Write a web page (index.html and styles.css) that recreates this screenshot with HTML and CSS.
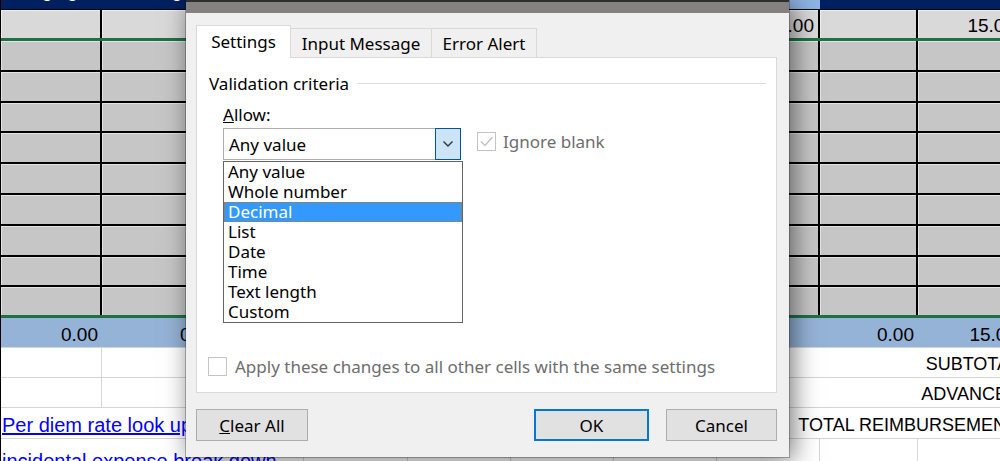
FILE: index.html
```html
<!DOCTYPE html>
<html>
<head>
<meta charset="utf-8">
<title>Data Validation</title>
<link rel="stylesheet" href="styles.css">
</head>
<body>
<div class="screen">
  <div class="sheet">
    <div class="row r-hdr">
      <div class="c hdr-left"><span class="hdr-txt">Lodging</span></div>
      <div class="c hdr-right"><span class="hdr-txt">Parking</span></div>
      <div class="c"></div><div class="c"></div><div class="c"></div><div class="c"></div><div class="c"></div>
      <div class="c sel"></div><div class="c"></div><div class="c"></div>
    </div>
    <div class="row r-top">
      <div class="c"></div><div class="c"></div><div class="c"></div><div class="c"></div><div class="c"></div><div class="c"></div><div class="c"></div>
      <div class="c num">0.00</div><div class="c"></div><div class="c num">15.00</div>
    </div>
    <div class="row r-gray"><div class="c"></div><div class="c"></div><div class="c"></div><div class="c"></div><div class="c"></div><div class="c"></div><div class="c"></div><div class="c"></div><div class="c"></div><div class="c"></div></div>
    <div class="row r-gray"><div class="c"></div><div class="c"></div><div class="c"></div><div class="c"></div><div class="c"></div><div class="c"></div><div class="c"></div><div class="c"></div><div class="c"></div><div class="c"></div></div>
    <div class="row r-gray"><div class="c"></div><div class="c"></div><div class="c"></div><div class="c"></div><div class="c"></div><div class="c"></div><div class="c"></div><div class="c"></div><div class="c"></div><div class="c"></div></div>
    <div class="row r-gray"><div class="c"></div><div class="c"></div><div class="c"></div><div class="c"></div><div class="c"></div><div class="c"></div><div class="c"></div><div class="c"></div><div class="c"></div><div class="c"></div></div>
    <div class="row r-gray"><div class="c"></div><div class="c"></div><div class="c"></div><div class="c"></div><div class="c"></div><div class="c"></div><div class="c"></div><div class="c"></div><div class="c"></div><div class="c"></div></div>
    <div class="row r-gray"><div class="c"></div><div class="c"></div><div class="c"></div><div class="c"></div><div class="c"></div><div class="c"></div><div class="c"></div><div class="c"></div><div class="c"></div><div class="c"></div></div>
    <div class="row r-gray"><div class="c"></div><div class="c"></div><div class="c"></div><div class="c"></div><div class="c"></div><div class="c"></div><div class="c"></div><div class="c"></div><div class="c"></div><div class="c"></div></div>
    <div class="row r-gray"><div class="c"></div><div class="c"></div><div class="c"></div><div class="c"></div><div class="c"></div><div class="c"></div><div class="c"></div><div class="c"></div><div class="c"></div><div class="c"></div></div>
    <div class="row r-gray r-gray-last"><div class="c"></div><div class="c"></div><div class="c"></div><div class="c"></div><div class="c"></div><div class="c"></div><div class="c"></div><div class="c"></div><div class="c"></div><div class="c"></div></div>
    <div class="row r-blue">
      <div class="c num">0.00</div><div class="c num">0.00</div>
      <div class="c"></div><div class="c"></div><div class="c"></div><div class="c"></div><div class="c"></div><div class="c"></div>
      <div class="c num">0.00</div><div class="c num">15.00</div>
    </div>
    <div class="row r-white">
      <div class="c line"></div><div class="c line"></div>
      <div class="c label">SUBTOTAL</div>
    </div>
    <div class="row r-white">
      <div class="c line"></div><div class="c line"></div>
      <div class="c label">ADVANCES</div>
    </div>
    <div class="row r-link">
      <div class="c link-cell"><a class="xl-link" href="#">Per diem rate look up</a></div>
      <div class="c label">TOTAL REIMBURSEMENT</div>
    </div>
    <div class="row r-last">
      <div class="c link-cell"><a class="xl-link" href="#">incidental expense break down</a></div>
      <div class="c line"></div><div class="c line"></div><div class="c line"></div><div class="c line"></div><div class="c line"></div><div class="c line"></div><div class="c line"></div>
    </div>
  </div>

  <div class="dialog">
    <div class="titlebar"></div>
    <div class="dbody">
      <div class="tabs">
        <div class="tab tab-active">Settings</div>
        <div class="tab tab-input">Input Message</div>
        <div class="tab tab-error">Error Alert</div>
      </div>
      <div class="panel">
        <div class="group-title">
          <span>Validation criteria</span>
          <span class="group-line"></span>
        </div>
        <div class="allow-label"><u>A</u>llow:</div>
        <div class="allow-row">
          <div class="combo">
            <div class="combo-text">Any value</div>
            <div class="combo-btn">
              <svg width="12" height="8" viewBox="0 0 12 8"><polyline points="1.5,1.5 6,6 10.5,1.5" fill="none" stroke="#333" stroke-width="1.4"/></svg>
            </div>
            <ul class="combo-list">
              <li>Any value</li>
              <li>Whole number</li>
              <li class="hl">Decimal</li>
              <li>List</li>
              <li>Date</li>
              <li>Time</li>
              <li>Text length</li>
              <li>Custom</li>
            </ul>
          </div>
          <div class="check check-ignore">
            <span class="box">
              <svg width="17" height="17" viewBox="0 0 17 17"><polyline points="3,8.5 7,12.5 14.5,4" fill="none" stroke="#c4c4c4" stroke-width="1.5"/></svg>
            </span>
            <span class="check-text">Ignore blank</span>
          </div>
        </div>
        <div class="check check-apply">
          <span class="box"></span>
          <span class="check-text">Apply these changes to all other cells with the same settings</span>
        </div>
      </div>
      <div class="buttons">
        <button class="btn btn-clear"><u>C</u>lear All</button>
        <span class="btn-spacer"></span>
        <button class="btn btn-ok">OK</button>
        <button class="btn btn-cancel">Cancel</button>
      </div>
    </div>
  </div>
</div>
</body>
</html>
```

FILE: styles.css
```css
* { box-sizing: border-box; }

html, body {
  margin: 0;
  padding: 0;
  background: #ffffff;
}

.screen {
  position: relative;
  width: 1000px;
  height: 461px;
  overflow: hidden;
  background: #ffffff;
}

/* ---------- spreadsheet ---------- */
.sheet {
  width: 1020px;
  border-left: 1px solid #000;
  font-family: "Liberation Sans", Arial, sans-serif;
  font-size: 18px;
  color: #000;
}

.row {
  display: grid;
  grid-template-columns: 101px 119px 83px 104px 103px 103px 103px 103px 98px 103px;
}

.c {
  display: flex;
  align-items: center;
  overflow: hidden;
  white-space: nowrap;
}

.num {
  justify-content: flex-end;
  padding-right: 4px;
  padding-top: 4px;
  font-size: 19px;
}

.r-hdr {
  height: 10px;
  background: #002060;
  border-bottom: 1px solid #000;
}
.r-hdr .c {
  align-items: flex-start;
  color: #fff;
}
.r-hdr .hdr-left { justify-content: flex-start; padding-left: 9px; }
.r-hdr .hdr-right { justify-content: flex-end; padding-right: 39px; }
.r-hdr .sel { background: #8db4e2; }
.hdr-txt {
  display: block;
  line-height: 22px;
  margin-top: -20px;
  font-size: 19px;
}

.r-top {
  height: 31px;
  background: #d9d9d9;
  border-bottom: 3px solid #1e7145;
}
.r-top .c {
  border-right: 2px solid #000;
  box-shadow: inset 1px 1px 0 #ededed;
}

.r-gray {
  height: 30.8px;
  background: #c6c6c6;
  border-bottom: 2px solid #000;
}
.r-gray .c {
  border-right: 2px solid #000;
  box-shadow: inset 1px 1px 0 #e3e3e3;
}
.r-gray-last {
  border-bottom: 3px solid #1e7145;
}

.r-blue {
  height: 30px;
  background: #95b3d7;
  border-bottom: 1px solid #d4d4d4;
}

.r-white {
  height: 30px;
  border-bottom: 1px solid #d4d4d4;
}
.r-white .line { border-right: 1px solid #d4d4d4; }
.r-white .label {
  grid-column: 3 / -1;
  justify-content: flex-end;
  padding-right: 2px;
  padding-top: 4px;
}

.r-link {
  height: 31px;
  border-bottom: 1px solid #d4d4d4;
}
.r-link .link-cell {
  grid-column: 1 / 4;
  padding-left: 1px;
  padding-top: 5px;
}
.r-link .label {
  grid-column: 4 / -1;
  justify-content: flex-end;
  padding-right: 4px;
  padding-top: 5px;
}

.r-last {
  height: 36px;
}
.r-last .link-cell {
  grid-column: 1 / 4;
  padding-left: 1px;
  align-items: flex-start;
  padding-top: 11px;
  border-right: 1px solid #d4d4d4;
}
.r-last .line { border-right: 1px solid #d4d4d4; }

.xl-link {
  color: #0000ff;
  text-decoration: underline;
  font-size: 20px;
}

/* ---------- dialog ---------- */
.dialog {
  position: absolute;
  left: 186px;
  top: 0;
  width: 603px;
  height: 457px;
  background: #f0f0f0;
  box-shadow: 0 0 0 1px rgba(0,0,0,0.25), 4px 3px 24px rgba(0,0,0,0.55);
  font-family: "Noto Sans", "Open Sans", sans-serif;
  font-size: 17px;
  color: #000;
  display: flex;
  flex-direction: column;
}

.titlebar {
  height: 13px;
  background: #858180;
  border-top: 2px solid #2e2e2e;
}

.dbody {
  flex: 1;
  padding: 12px 12px 0 10px;
  display: flex;
  flex-direction: column;
}

.tabs {
  display: flex;
  align-items: flex-end;
  height: 32px;
}
.tab {
  height: 29px;
  border: 1px solid #d9d9d9;
  border-bottom: none;
  background: #f0f0f0;
  display: flex;
  align-items: center;
  justify-content: center;
  margin-left: -1px;
  padding-top: 1px;
}
.tab-active {
  width: 95px;
  height: 33px;
  margin-left: 0;
  background: #fff;
  position: relative;
  z-index: 1;
  margin-bottom: -1px;
  padding-top: 0;
  padding-bottom: 1px;
}
.tab-input { width: 142px; }
.tab-error { width: 106px; }

.panel {
  width: 581px;
  height: 336px;
  background: #fff;
  border: 1px solid #d9d9d9;
  display: flex;
  flex-direction: column;
  padding: 0 0 14px 0;
}

.group-title {
  display: flex;
  align-items: center;
  height: 20px;
  margin-top: 15px;
  padding-left: 12px;
  padding-right: 10px;
}
.group-line {
  flex: 1;
  height: 0;
  border-top: 1px solid #dcdcdc;
  margin-left: 8px;
}

.allow-label {
  margin-top: 12px;
  margin-left: 26px;
  height: 20px;
  line-height: 20px;
}

.allow-row {
  display: flex;
  align-items: flex-start;
  margin-top: 3px;
  margin-left: 26px;
}

.combo {
  position: relative;
  width: 238px;
  height: 32px;
  display: flex;
  border: 1px solid #adadad;
  border-right: none;
  background: #fff;
}
.combo-text {
  flex: 1;
  display: flex;
  align-items: center;
  padding-left: 5px;
}
.combo-btn {
  width: 26px;
  height: 32px;
  margin-top: -1px;
  background: #cce4f7;
  border: 1px solid #005499;
  display: flex;
  align-items: center;
  justify-content: center;
}

.combo-list {
  position: absolute;
  left: -1px;
  top: 32px;
  width: 240px;
  margin: 0;
  padding: 0;
  list-style: none;
  background: #fff;
  border: 1px solid #646464;
  z-index: 2;
}
.combo-list li {
  height: 20px;
  line-height: 20px;
  padding-left: 4px;
}
.combo-list .hl {
  background: #3399ff;
  color: #fff;
  outline: 1px dotted #c8702a;
  outline-offset: -1px;
}

.check {
  display: flex;
  align-items: center;
  color: #6d6d6d;
}
.check .box {
  width: 19px;
  height: 19px;
  border: 1px solid #c4c4c4;
  background: #fff;
  display: flex;
  align-items: center;
  justify-content: center;
}
.check-ignore {
  margin-left: 16px;
  margin-top: 2px;
}
.check-ignore .check-text { margin-left: 7px; }

.check-apply {
  margin-top: auto;
  margin-left: 11px;
}
.check-apply .check-text { margin-left: 8px; }

.buttons {
  display: flex;
  margin-top: 16px;
  height: 32px;
}
.btn {
  font-family: "Noto Sans", "Open Sans", sans-serif;
  font-size: 17px;
  color: #000;
  background: #e1e1e1;
  border: 1px solid #adadad;
  height: 32px;
  padding: 0;
  margin: 0;
}
.btn-clear { width: 112px; }
.btn-spacer { flex: 1; }
.btn-ok {
  width: 115px;
  border: 2px solid #0078d7;
  margin-right: 17px;
}
.btn-cancel { width: 111px; }
```
